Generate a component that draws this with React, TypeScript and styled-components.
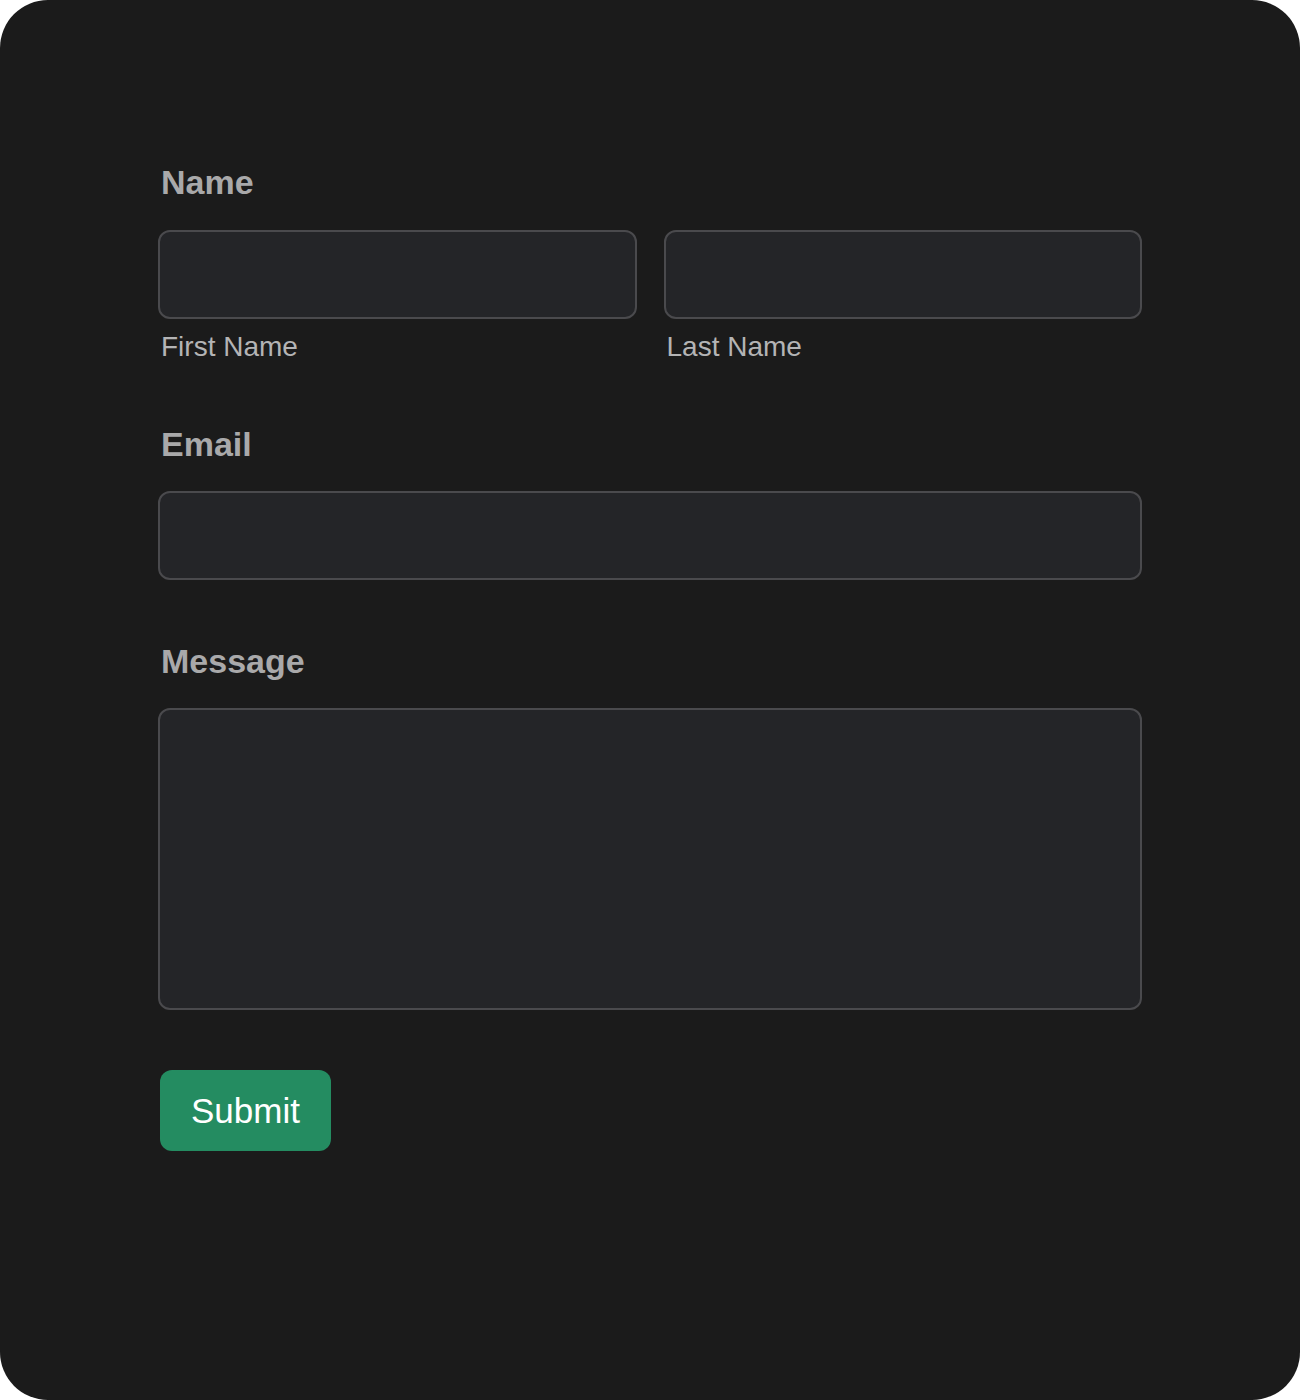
import React from 'react';
import styled, { createGlobalStyle } from 'styled-components';

const GlobalStyle = createGlobalStyle`
  html, body {
    margin: 0;
    padding: 0;
    background: #ffffff;
  }
  * {
    box-sizing: border-box;
  }
`;

const Card = styled.div`
  width: 1300px;
  min-height: 1400px;
  padding: 162px 158px;
  border-radius: 48px;
  background-color: #1b1b1b;
  font-family: 'Liberation Sans', Arial, sans-serif;
`;

const Form = styled.form`
  display: flex;
  flex-direction: column;
  width: 984px;
`;

const Field = styled.div<{ $gap?: number }>`
  display: flex;
  flex-direction: column;
  margin-top: ${(props) => props.$gap ?? 0}px;
`;

const Label = styled.label<{ $gap?: number }>`
  margin: 0 0 ${(props) => props.$gap ?? 28}px 3px;
  font-size: 34px;
  font-weight: 700;
  line-height: 40px;
  color: #a9a9aa;
`;

const Row = styled.div`
  display: grid;
  grid-template-columns: 1fr 1fr;
  column-gap: 27px;
`;

const Column = styled.div`
  display: flex;
  flex-direction: column;
`;

const Input = styled.input`
  height: 89px;
  width: 100%;
  padding: 0 20px;
  border: 2px solid #4a4a4d;
  border-radius: 12px;
  background-color: #242528;
  color: #e0e0e0;
  font: inherit;
  font-size: 28px;
  outline: none;
`;

const TextArea = styled.textarea`
  display: block;
  height: 302px;
  width: 100%;
  padding: 20px;
  border: 2px solid #4a4a4d;
  border-radius: 12px;
  background-color: #242528;
  color: #e0e0e0;
  font: inherit;
  font-size: 28px;
  resize: none;
  outline: none;
`;

const SubLabel = styled.span`
  margin: 12px 0 0 3px;
  font-size: 28px;
  line-height: 32px;
  color: #b4b4b5;
`;

const Button = styled.button`
  align-self: flex-start;
  height: 81px;
  margin: 60px 0 0 2px;
  padding: 0 31px;
  border: none;
  border-radius: 12px;
  background-color: #248c61;
  color: #ffffff;
  font-family: inherit;
  font-size: 35px;
  cursor: pointer;
`;

const App: React.FC = () => {
  return (
    <>
      <GlobalStyle />
      <Card>
        <Form onSubmit={(e) => e.preventDefault()}>
          <Field>
            <Label>Name</Label>
            <Row>
              <Column>
                <Input type="text" />
                <SubLabel>First Name</SubLabel>
              </Column>
              <Column>
                <Input type="text" />
                <SubLabel>Last Name</SubLabel>
              </Column>
            </Row>
          </Field>
          <Field $gap={61}>
            <Label $gap={27}>Email</Label>
            <Input type="email" />
          </Field>
          <Field $gap={61}>
            <Label $gap={27}>Message</Label>
            <TextArea />
          </Field>
          <Button type="submit">Submit</Button>
        </Form>
      </Card>
    </>
  );
};

export default App;
